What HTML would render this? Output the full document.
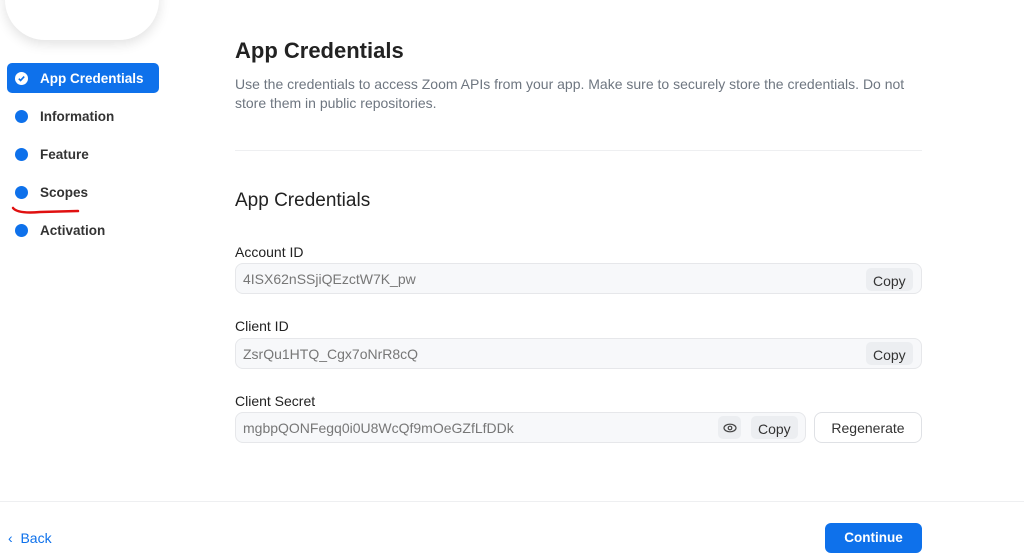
<!DOCTYPE html>
<html><head><style>
*{box-sizing:border-box;margin:0;padding:0}
body{width:1024px;height:555px;overflow:hidden;background:#fff;font-family:"Liberation Sans",Arial,sans-serif;position:relative;color:#222230}
.abs{position:absolute}
.logo{left:5px;top:-30px;width:154px;height:70px;border-radius:0 0 40px 40px;background:#fff;box-shadow:0 4px 12px rgba(0,0,0,.12)}
.nav{left:7px;width:152px;height:30px;font-size:13.5px;font-weight:bold;color:#333;display:flex;align-items:center;padding-left:8px}
.nav .d{width:13px;height:13px;border-radius:50%;background:#0e71eb;margin-right:12px}
.nav.act{background:#0e71eb;color:#fff;border-radius:5px}
.nav.act .d{background:#fff;display:flex;align-items:center;justify-content:center}
.lbl{font-size:14px;color:#222}
.inp{left:235px;height:31px;background:#f7f8fa;border:1px solid #e6e7ea;border-radius:8px;font-size:14px;color:#777;padding:7px 0 0 7px}
.btn{height:23px;background:#eceef1;border-radius:5px;font-size:14px;color:#333;padding:5px 7px 0}
</style></head><body>
<div class="abs logo"></div>
<div class="abs nav act" style="top:63px"><span class="d"><svg width="9" height="9" viewBox="0 0 10 10"><path d="M2 5.2l2 2 4-4.4" stroke="#0e71eb" stroke-width="1.8" fill="none"/></svg></span>App Credentials</div>
<div class="abs nav" style="top:101px"><span class="d"></span>Information</div>
<div class="abs nav" style="top:139px"><span class="d"></span>Feature</div>
<div class="abs nav" style="top:177px"><span class="d"></span>Scopes</div>
<div class="abs nav" style="top:215px"><span class="d"></span>Activation</div>
<svg class="abs" style="left:10px;top:205px" width="72" height="12"><path d="M3 3 Q8 9 30 7 L68 6" stroke="#e01010" stroke-width="2.5" fill="none" stroke-linecap="round"/></svg>

<div class="abs" style="left:235px;top:38px;font-size:22px;font-weight:bold;color:#222">App Credentials</div>
<div class="abs" style="left:235px;top:75px;width:700px;font-size:14px;line-height:19px;color:#6e7680">Use the credentials to access Zoom APIs from your app. Make sure to securely store the credentials. Do not store them in public repositories.</div>
<div class="abs" style="left:235px;top:150px;width:687px;height:1px;background:#eeeff1"></div>
<div class="abs" style="left:235px;top:190px;font-size:19px;color:#222">App Credentials</div>

<div class="abs lbl" style="left:235px;top:244px">Account ID</div>
<div class="abs inp" style="top:263px;width:687px">4ISX62nSSjiQEzctW7K_pw</div>
<div class="abs btn" style="left:866px;top:268px">Copy</div>

<div class="abs lbl" style="left:235px;top:318px">Client ID</div>
<div class="abs inp" style="top:338px;width:687px">ZsrQu1HTQ_Cgx7oNrR8cQ</div>
<div class="abs btn" style="left:866px;top:342px">Copy</div>

<div class="abs lbl" style="left:235px;top:393px">Client Secret</div>
<div class="abs inp" style="top:412px;width:571px">mgbpQONFegq0i0U8WcQf9mOeGZfLfDDk</div>
<div class="abs btn" style="left:718px;top:416px;width:23px;padding:0;display:flex;align-items:center;justify-content:center"><svg width="14" height="10" viewBox="0 0 14 10"><ellipse cx="7" cy="5" rx="6" ry="3.8" stroke="#444" stroke-width="1.2" fill="none"/><circle cx="7" cy="5" r="1.8" stroke="#444" stroke-width="1.2" fill="none"/></svg></div>
<div class="abs btn" style="left:751px;top:416px">Copy</div>
<div class="abs" style="left:814px;top:412px;width:108px;height:31px;border:1px solid #dfe1e5;border-radius:8px;font-size:14px;color:#333;text-align:center;padding-top:7px">Regenerate</div>

<div class="abs" style="left:0;top:501px;width:1024px;height:1px;background:#eeeff1"></div>
<div class="abs" style="left:8px;top:530px;font-size:14px;color:#0e71eb">&lsaquo;&nbsp; Back</div>
<div class="abs" style="left:825px;top:523px;width:97px;height:30px;background:#0e71eb;border-radius:6px;color:#fff;font-size:13.5px;font-weight:bold;text-align:center;padding-top:7px">Continue</div>
</body></html>
